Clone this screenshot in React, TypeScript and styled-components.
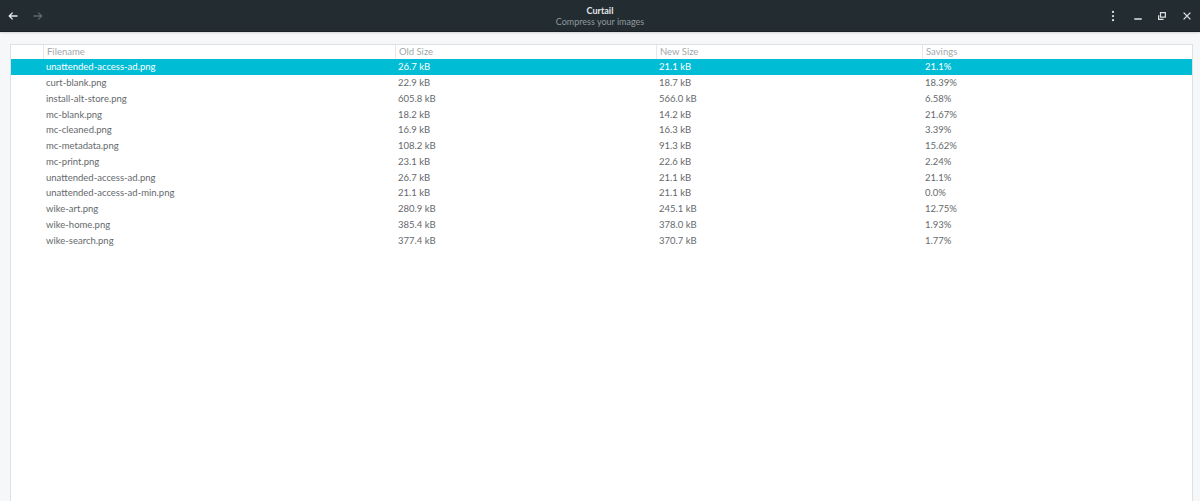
import React from "react";
import styled, { createGlobalStyle } from "styled-components";

type IRow = {
  name: string;
  oldSize: string;
  newSize: string;
  savings: string;
};

const rows: IRow[] = [
  { name: "unattended-access-ad.png", oldSize: "26.7 kB", newSize: "21.1 kB", savings: "21.1%" },
  { name: "curt-blank.png", oldSize: "22.9 kB", newSize: "18.7 kB", savings: "18.39%" },
  { name: "install-alt-store.png", oldSize: "605.8 kB", newSize: "566.0 kB", savings: "6.58%" },
  { name: "mc-blank.png", oldSize: "18.2 kB", newSize: "14.2 kB", savings: "21.67%" },
  { name: "mc-cleaned.png", oldSize: "16.9 kB", newSize: "16.3 kB", savings: "3.39%" },
  { name: "mc-metadata.png", oldSize: "108.2 kB", newSize: "91.3 kB", savings: "15.62%" },
  { name: "mc-print.png", oldSize: "23.1 kB", newSize: "22.6 kB", savings: "2.24%" },
  { name: "unattended-access-ad.png", oldSize: "26.7 kB", newSize: "21.1 kB", savings: "21.1%" },
  { name: "unattended-access-ad-min.png", oldSize: "21.1 kB", newSize: "21.1 kB", savings: "0.0%" },
  { name: "wike-art.png", oldSize: "280.9 kB", newSize: "245.1 kB", savings: "12.75%" },
  { name: "wike-home.png", oldSize: "385.4 kB", newSize: "378.0 kB", savings: "1.93%" },
  { name: "wike-search.png", oldSize: "377.4 kB", newSize: "370.7 kB", savings: "1.77%" },
];

const GlobalStyle = createGlobalStyle`
  html, body {
    margin: 0;
    padding: 0;
    height: 100%;
  }
  body {
    font-family: Lato, "Open Sans", sans-serif;
    background-color: #f6f7f9;
  }
  #root {
    height: 100%;
  }
`;

const App = () => {
  return (
    <>
      <GlobalStyle />
      <Window>
        <HeaderBar>
          <NavGroup>
            <IconButton>
              <svg width="12" height="12" viewBox="0 0 16 16" fill="none">
                <path d="M14 8H3M7.5 3.5L3 8l4.5 4.5" stroke="#e6e8e9" strokeWidth="1.8" />
              </svg>
            </IconButton>
            <IconButton>
              <svg width="12" height="12" viewBox="0 0 16 16" fill="none">
                <path d="M2 8h11M8.5 3.5L13 8l-4.5 4.5" stroke="#5f686d" strokeWidth="1.8" />
              </svg>
            </IconButton>
          </NavGroup>
          <TitleBlock>
            <Title>Curtail</Title>
            <Subtitle>Compress your images</Subtitle>
          </TitleBlock>
          <WindowControls>
            <IconButton>
              <svg width="12" height="12" viewBox="0 0 16 16" fill="#dfe2e3">
                <circle cx="8" cy="2.5" r="1.5" />
                <circle cx="8" cy="8" r="1.5" />
                <circle cx="8" cy="13.5" r="1.5" />
              </svg>
            </IconButton>
            <IconButton>
              <svg width="12" height="12" viewBox="0 0 16 16" fill="#dfe2e3">
                <rect x="3" y="11" width="10" height="2" />
              </svg>
            </IconButton>
            <IconButton>
              <svg width="12" height="12" viewBox="0 0 16 16" fill="none" stroke="#dfe2e3">
                <rect x="6" y="3.5" width="6.5" height="6" strokeWidth="1.6" />
                <path d="M3.5 7v5.5H10" strokeWidth="1.6" />
              </svg>
            </IconButton>
            <IconButton>
              <svg width="12" height="12" viewBox="0 0 16 16" fill="none">
                <path d="M3.5 3.5l9 9M12.5 3.5l-9 9" stroke="#dfe2e3" strokeWidth="1.8" />
              </svg>
            </IconButton>
          </WindowControls>
        </HeaderBar>
        <Content>
          <Panel>
            <Table>
              <HeadRow>
                <Spacer />
                <HeadCell>Filename</HeadCell>
                <HeadCell>Old Size</HeadCell>
                <HeadCell>New Size</HeadCell>
                <HeadCell>Savings</HeadCell>
              </HeadRow>
              {rows.map((row, key) => (
                <Row key={key} selected={key === 0}>
                  <Spacer />
                  <Cell>{row.name}</Cell>
                  <Cell>{row.oldSize}</Cell>
                  <Cell>{row.newSize}</Cell>
                  <Cell>{row.savings}</Cell>
                </Row>
              ))}
            </Table>
          </Panel>
        </Content>
      </Window>
    </>
  );
};

export default App;

const Window = styled.div`
  display: flex;
  flex-direction: column;
  height: 100vh;
  overflow: hidden;
`;

const HeaderBar = styled.header`
  height: 31px;
  flex-shrink: 0;
  background-color: #232c31;
  border-bottom: 1px solid #1a2024;
  box-shadow: 0 1px 2px rgba(0, 0, 0, 0.15);
  display: grid;
  grid-template-columns: 1fr auto 1fr;
  align-items: center;
  padding: 0 1px;
`;

const NavGroup = styled.div`
  display: flex;
  align-items: center;
`;

const WindowControls = styled(NavGroup)`
  justify-content: flex-end;
`;

const IconButton = styled.div`
  width: 24.5px;
  height: 30px;
  display: flex;
  align-items: center;
  justify-content: center;
`;

const TitleBlock = styled.div`
  display: flex;
  flex-direction: column;
  align-items: center;
  line-height: 11px;
  padding-top: 1px;
`;

const Title = styled.div`
  color: #e3e6e7;
  font-weight: bold;
  font-size: 9px;
`;

const Subtitle = styled.div`
  color: #8f999e;
  font-size: 9px;
`;

const Content = styled.main`
  flex: 1;
  padding: 12px 7px 0 10px;
  display: flex;
`;

const Panel = styled.section`
  flex: 1;
  background-color: #ffffff;
  border: 1px solid #dde1e4;
  border-bottom: none;
`;

const Table = styled.div`
  display: flex;
  flex-direction: column;
`;

const HeadRow = styled.div`
  display: grid;
  grid-template-columns: 32px 352px 261px 266px 1fr;
  height: 14px;
  align-items: stretch;
`;

const Spacer = styled.div``;

const HeadCell = styled.div`
  border-left: 1px solid #e6e8ea;
  padding-left: 3px;
  font-size: 9.5px;
  line-height: 14px;
  color: #a2a7aa;
`;

const Row = styled.div<{ selected?: boolean }>`
  display: grid;
  grid-template-columns: 33px 352px 261px 266px 1fr;
  height: 15.75px;
  align-items: center;
  background-color: ${(p) => (p.selected ? "#00bcd4" : "transparent")};
  color: ${(p) => (p.selected ? "#ffffff" : "#65696c")};
  &:first-of-type {
    height: 17px;
  }
`;

const Cell = styled.div`
  padding-left: 2px;
  font-size: 9.5px;
  white-space: nowrap;
`;
